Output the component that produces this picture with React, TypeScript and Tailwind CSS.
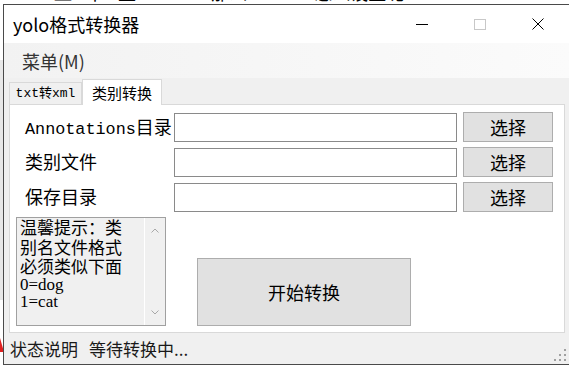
import React from "react";

const sans = "font-['Noto_Sans_CJK_SC','Noto_Sans',sans-serif]";
const mono = "font-['Liberation_Mono','Noto_Sans_CJK_SC',monospace]";

function ChooseButton() {
  return (
    <button className="h-[30px] w-[90px] shrink-0 border border-[#adadad] bg-[#e1e1e1] text-[18px] leading-none text-black flex items-center justify-center">
      选择
    </button>
  );
}

function Input() {
  return <div className="h-[29px] w-[283px] shrink-0 border border-[#8a8a8a] bg-white" />;
}

function Row({ children }: { children: React.ReactNode }) {
  return (
    <div className="h-[30px] flex items-center">
      <div className="w-[149px] shrink-0 whitespace-nowrap">{children}</div>
      <Input />
      <div className="w-[6px] shrink-0" />
      <ChooseButton />
    </div>
  );
}

export default function App() {
  return (
    <div className={`relative w-[569px] h-[365px] overflow-hidden bg-white ${sans}`}>
      {/* desktop content behind the window */}
      <div className="absolute left-[196px] top-[-18px] text-[18px] leading-[20px] text-black whitespace-nowrap">
        2.那么vmware怎么设置呢:
      </div>
      <div className="absolute left-[22px] top-[-18px] text-[18px] leading-[20px] text-black whitespace-nowrap tracking-[14px]">
        一皿十上
      </div>
      <div className="absolute left-0 top-[60px] w-[3px] h-[240px] bg-[#e8e8e8]" />
      <svg className="absolute left-0 top-[338px]" width="4" height="14" viewBox="0 0 4 14">
        <polygon points="0,0 4,14 0,14" fill="#e02020" />
      </svg>

      {/* window */}
      <div className="absolute left-[3px] top-[4px] right-0 bottom-0 border-l border-t border-b border-[#4a4a4a] bg-white flex flex-col">
        {/* title bar */}
        <div className="h-[38px] bg-white flex items-center relative shrink-0">
          <span className="ml-[9px] text-[18px] leading-none text-black">yolo格式转换器</span>
          <div className="ml-auto mr-[2px] flex items-center h-full">
            <div className="w-[58px] h-full flex items-center justify-center">
              <div className="w-[12px] h-px bg-black" />
            </div>
            <div className="w-[58px] h-full flex items-center justify-center">
              <div className="w-[12px] h-[11px] border border-[#c8c8c8]" />
            </div>
            <div className="w-[58px] h-full flex items-center justify-center">
              <svg width="12" height="12" viewBox="0 0 12 12">
                <path d="M0.5 0.5 L11.5 11.5 M11.5 0.5 L0.5 11.5" stroke="#000" strokeWidth="1" />
              </svg>
            </div>
          </div>
        </div>

        {/* menu bar */}
        <div className="h-[35px] shrink-0 bg-linear-to-r from-[#f2f2f2] to-[#fbfbfb] flex items-center">
          <span className="ml-[18px] text-[18px] leading-none text-[#333]">菜单(M)</span>
        </div>

        {/* tab widget area */}
        <div className="flex-1 bg-[#f0f0f0] flex flex-col pl-[5px] pr-[4px]">
          <div className="h-[26px] flex items-end shrink-0">
            <div className="h-[22px] w-[73px] border border-b-0 border-[#d9d9d9] bg-[#f0f0f0] flex items-center justify-center">
              <span className={`${mono} text-[13px] leading-none text-black`}>txt转xml</span>
            </div>
            <div className="relative z-10 -mb-px h-[26px] w-[80px] border border-b-0 border-[#d9d9d9] bg-white flex items-center justify-center">
              <span className="text-[15px] leading-none text-black">类别转换</span>
            </div>
          </div>

          {/* pane */}
          <div className="h-[229px] border border-[#d9d9d9] bg-white pl-[6px] pt-[7px] shrink-0">
            <div className="ml-[9px] flex flex-col gap-[5px]">
              <Row>
                <span className={`${mono} text-[16.8px] leading-none text-black`}>Annotations</span>
                <span className="text-[18px] leading-none text-black">目录</span>
              </Row>
              <Row>
                <span className="text-[18px] leading-none text-black">类别文件</span>
              </Row>
              <Row>
                <span className="text-[18px] leading-none text-black">保存目录</span>
              </Row>
            </div>

            <div className="mt-[5px] flex items-end gap-[31px]">
              <div className="h-[109px] w-[150px] border border-[#a0a0a0] bg-[#f0f0f0] flex">
                <div className="flex-1 pl-[3px] -mt-[1px] text-black overflow-hidden">
                  <div className="text-[17px] leading-[19.5px] whitespace-nowrap">温馨提示：类</div>
                  <div className="text-[17px] leading-[19.5px] whitespace-nowrap">别名文件格式</div>
                  <div className="text-[17px] leading-[19.5px] whitespace-nowrap">必须类似下面</div>
                  <div className="font-['Liberation_Serif',serif] text-[17px] leading-[17px] whitespace-nowrap">0=dog</div>
                  <div className="font-['Liberation_Serif',serif] text-[17px] leading-[17px] whitespace-nowrap">1=cat</div>
                </div>
                <div className="w-[21px] border-l border-white flex flex-col items-center justify-between py-[10px]">
                  <svg width="8" height="5" viewBox="0 0 8 5">
                    <polyline points="0.5,4.5 4,1 7.5,4.5" fill="none" stroke="#a8a8a8" strokeWidth="1" />
                  </svg>
                  <svg width="8" height="5" viewBox="0 0 8 5">
                    <polyline points="0.5,0.5 4,4 7.5,0.5" fill="none" stroke="#a8a8a8" strokeWidth="1" />
                  </svg>
                </div>
              </div>
              <button className="h-[68px] w-[214px] border border-[#adadad] bg-[#e1e1e1] text-[18px] leading-none text-black flex items-center justify-center">
                开始转换
              </button>
            </div>
          </div>

          {/* status bar */}
          <div className="flex-1 -ml-[5px] -mr-[4px] flex items-center relative">
            <span className="ml-[6px] text-[17px] leading-none text-[#1a1a1a]">状态说明</span>
            <span className="ml-[11px] text-[17px] leading-none text-[#1a1a1a]">等待转换中...</span>
            <svg className="absolute right-[3px] bottom-[3px]" width="12" height="12" viewBox="0 0 12 12">
              <rect x="10" y="0" width="2" height="2" fill="#a0a0a0" />
              <rect x="5" y="5" width="2" height="2" fill="#a0a0a0" />
              <rect x="10" y="5" width="2" height="2" fill="#a0a0a0" />
              <rect x="0" y="10" width="2" height="2" fill="#a0a0a0" />
              <rect x="5" y="10" width="2" height="2" fill="#a0a0a0" />
              <rect x="10" y="10" width="2" height="2" fill="#a0a0a0" />
            </svg>
          </div>
        </div>
      </div>
    </div>
  );
}
